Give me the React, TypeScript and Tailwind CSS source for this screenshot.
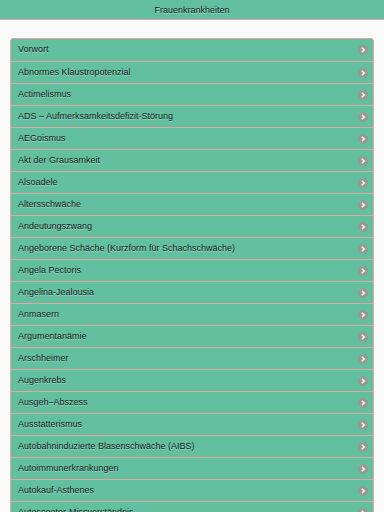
const items = [
  'Vorwort',
  'Abnormes Klaustropotenzial',
  'Actimelismus',
  'ADS – Aufmerksamkeitsdefizit-Störung',
  'AEGoismus',
  'Akt der Grausamkeit',
  'Alsoadele',
  'Altersschwäche',
  'Andeutungszwang',
  'Angeborene Schäche (Kurzform für Schachschwäche)',
  'Angela Pectoris',
  'Angelina-Jealousia',
  'Anmasern',
  'Argumentanämie',
  'Arschheimer',
  'Augenkrebs',
  'Ausgeh–Abszess',
  'Ausstatterismus',
  'Autobahninduzierte Blasenschwäche (AIBS)',
  'Autoimmunerkrankungen',
  'Autokauf-Asthenes',
  'Autoscooter-Missverständnis',
  'Backofenphobie',
]

function Chevron() {
  return (
    <span className="flex h-[10px] w-[10px] items-center justify-center rounded-full bg-[#999990]">
      <svg width="6" height="6" viewBox="0 0 6 6">
        <path d="M1.8 0.8 L4.2 3 L1.8 5.2" fill="none" stroke="#fff" strokeWidth="1.5" />
      </svg>
    </span>
  )
}

export default function App() {
  return (
    <div className="min-h-[512px] bg-[#f9f9f9] font-['Liberation_Sans',Arial,sans-serif] text-[9px] text-[#1a1a1a]">
      <header className="flex h-[20px] items-center justify-center border-b border-[#e5a4a8] bg-[#62bf9f] pt-[2px] [text-shadow:0_1px_0_rgba(255,255,255,0.4)]">
        Frauenkrankheiten
      </header>
      <ul className="mx-[10px] mt-[18px] overflow-hidden rounded-[3px] border border-[#e5a4a8] bg-[#62bf9f]">
        {items.map((item, i) => (
          <li
            key={item}
            className={
              'flex h-[22px] items-center justify-between pl-[7px] pr-[5px] [text-shadow:0_1px_0_rgba(255,255,255,0.35)] ' +
              (i > 0 ? 'border-t border-[#e5a4a8]' : '')
            }
          >
            <span>{item}</span>
            <Chevron />
          </li>
        ))}
      </ul>
    </div>
  )
}
